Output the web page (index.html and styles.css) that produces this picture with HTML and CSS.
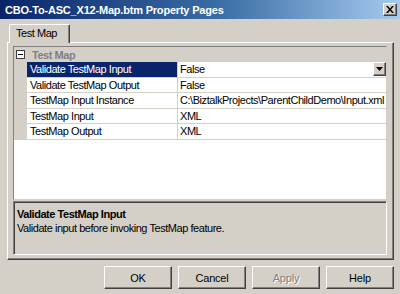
FILE: index.html
```html
<!DOCTYPE html>
<html lang="en">
<head>
    <meta charset="UTF-8">
    <title>CBO-To-ASC_X12-Map.btm Property Pages</title>
    <link rel="stylesheet" href="styles.css">
</head>
<body>
    <div class="dialog">
        <div class="titlebar">
            <span class="title">CBO-To-ASC_X12-Map.btm Property Pages</span>
            <span class="close">
                <svg width="8" height="7" viewBox="0 0 8 7"><path d="M0 0h2l2 2.5L6 0h2L5 3.5 8 7H6L4 4.5 2 7H0l3-3.5z" fill="#000"/></svg>
            </span>
        </div>
        <div class="content">
            <div class="tabs">
                <div class="tab">Test Map</div>
            </div>
            <div class="panel">
                <div class="grid">
                    <div class="category">
                        <svg class="toggle" width="9" height="9" viewBox="0 0 9 9"><rect x="0.5" y="0.5" width="8" height="8" fill="#fff" stroke="#404040"/><path d="M2 4.5h5" stroke="#000"/></svg>
                        <span>Test Map</span>
                    </div>
                    <div class="row">
                        <div class="margin"></div>
                        <div class="label selected">Validate TestMap Input</div>
                        <div class="value">False<span class="drop"><svg width="7" height="4" viewBox="0 0 7 4"><path d="M0 0h7L3.5 4z" fill="#000"/></svg></span></div>
                    </div>
                    <div class="row">
                        <div class="margin"></div>
                        <div class="label">Validate TestMap Output</div>
                        <div class="value">False</div>
                    </div>
                    <div class="row">
                        <div class="margin"></div>
                        <div class="label">TestMap Input Instance</div>
                        <div class="value">C:\BiztalkProjects\ParentChildDemo\Input.xml</div>
                    </div>
                    <div class="row">
                        <div class="margin"></div>
                        <div class="label">TestMap Input</div>
                        <div class="value">XML</div>
                    </div>
                    <div class="row">
                        <div class="margin"></div>
                        <div class="label">TestMap Output</div>
                        <div class="value">XML</div>
                    </div>
                </div>
                <div class="desc">
                    <div class="desc-title">Validate TestMap Input</div>
                    <div>Validate input before invoking TestMap feature.</div>
                </div>
            </div>
            <div class="buttons">
                <button>OK</button>
                <button>Cancel</button>
                <button class="disabled">Apply</button>
                <button>Help</button>
            </div>
        </div>
    </div>
</body>
</html>
```

FILE: styles.css
```css
body { margin: 0; background: #d4d0c8; }
.dialog { width: 400px; height: 294px; overflow: hidden; background: #d4d0c8; font-family: "Liberation Sans", Arial, sans-serif; font-size: 11px; letter-spacing: -0.45px; color: #000; }

.titlebar { height: 19px; display: flex; align-items: center; justify-content: space-between; padding: 0 3px 0 5px; background: linear-gradient(to right, #0a246a, #3a6ea5 55%, #a6caf0); }
.title { color: #fff; font-weight: bold; letter-spacing: -0.2px; }
.close { width: 12px; height: 11px; display: flex; align-items: center; justify-content: center; background: #d4d0c8; border: 1px solid; border-color: #fff #404040 #404040 #fff; box-shadow: inset -1px -1px 0 #808080; }

.content { padding: 5px 6px 0 7px; }
.tabs { display: flex; padding-left: 2px; }
.tab { position: relative; z-index: 1; width: 53px; height: 18px; margin-bottom: -1px; padding-left: 6px; line-height: 17px; background: #d4d0c8; border: 1px solid; border-bottom: none; border-color: #fff #404040 #fff #fff; border-radius: 2px 2px 0 0; box-shadow: inset -1px 0 0 #808080; }

.panel { height: 218px; box-sizing: border-box; padding: 3px 6px 0 5px; border: 1px solid; border-color: #fff #404040 #404040 #fff; box-shadow: inset -1px -1px 0 #808080; }

.grid { height: 154px; box-sizing: border-box; background: #fff; border: 1px solid; border-color: #808080 #d4d0c8 #d4d0c8 #808080; }
.category { height: 15px; display: flex; align-items: center; background: #d4d0c8; color: #808080; font-weight: bold; }
.toggle { margin: 0 7px 0 2px; }
.row { height: 15.6px; box-sizing: border-box; display: flex; border-bottom: 1px solid #d4d0c8; line-height: 14px; }
.margin { width: 13px; background: #d4d0c8; }
.label { width: 147px; padding-left: 3px; border-right: 1px solid #d4d0c8; white-space: nowrap; }
.label.selected { background: #0a246a; color: #fff; }
.value { flex: 1; position: relative; padding-left: 2px; white-space: nowrap; }
.drop { position: absolute; right: 0; top: 0; width: 11px; height: 12px; display: flex; align-items: center; justify-content: center; background: #d4d0c8; border: 1px solid; border-color: #fff #404040 #404040 #fff; box-shadow: inset -1px -1px 0 #808080; }

.desc { height: 54px; box-sizing: border-box; margin-top: 1px; padding: 5px 3px; border: 1px solid; border-color: #808080 #fff #fff #808080; box-shadow: inset 1px 1px 0 #404040; line-height: 14px; }
.desc-title { font-weight: bold; }

.buttons { display: flex; justify-content: flex-end; gap: 6px; margin-top: 6px; }
button { width: 68px; height: 23px; padding: 0; font: inherit; letter-spacing: -0.2px; color: #000; background: #d4d0c8; border: 1px solid; border-color: #fff #404040 #404040 #fff; box-shadow: inset -1px -1px 0 #808080; }
button.disabled { color: #808080; text-shadow: 1px 1px 0 #fff; }
```
